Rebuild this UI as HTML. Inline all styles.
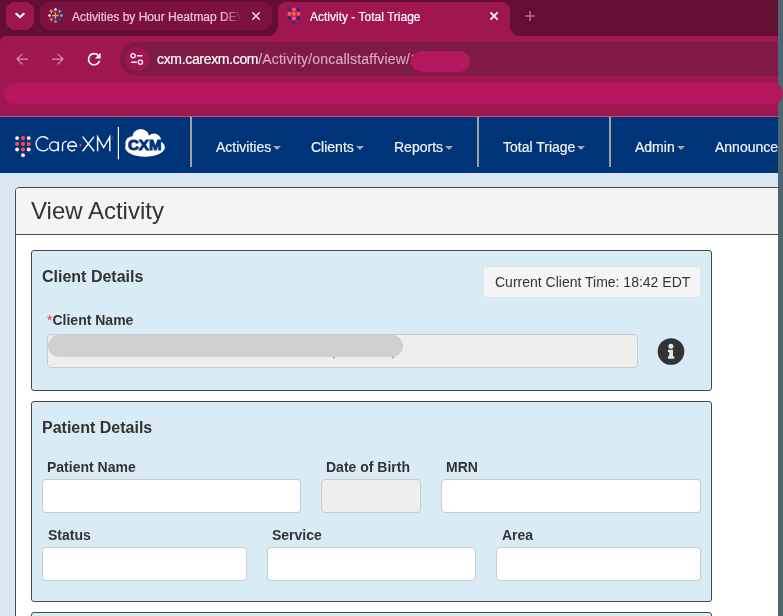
<!DOCTYPE html>
<html><head><meta charset="utf-8">
<style>
*{box-sizing:border-box;margin:0;padding:0}
html,body{width:783px;height:616px;overflow:hidden;background:#dae6f2;font-family:"Liberation Sans",sans-serif}
.abs{position:absolute}
.navitem,.h4,.lbl,.txt{will-change:transform}
#frame{position:absolute;left:0;top:0;width:783px;height:60px;background:#640e33}
#ddbtn{left:6px;top:2px;width:28px;height:28px;border-radius:9px;background:#9d1650}
#tab1{left:40px;top:2px;width:232px;height:28px;border-radius:9px;background:#7c1140}
#tab2{left:278px;top:2px;width:232px;height:40px;border-radius:8px 8px 0 0;background:#a01650}
#toolbar{left:0;top:36px;width:783px;height:80px;background:#a01650;border-top-left-radius:6px}
#omni{left:120px;top:42px;width:680px;height:34px;border-radius:17px;background:#7e1a45}
#siteinfo{left:125px;top:47px;width:24px;height:24px;border-radius:12px;background:#a01650}
#pill{left:4px;top:83px;width:779px;height:21px;border-radius:10.5px;background:#b5175f}
#nav{left:0;top:117px;width:783px;height:56px;background:#003478}
#navline{left:0;top:116px;width:783px;height:1px;background:#c8507f}
.navitem{position:absolute;top:139px;color:#f2f2f2;font-size:14px;line-height:16px;white-space:nowrap;-webkit-text-stroke:0.2px #f2f2f2}
.caret{display:inline-block;width:0;height:0;border-left:4px solid transparent;border-right:4px solid transparent;border-top:4px solid #a8a8a8;vertical-align:middle;margin-left:2px;margin-top:-1px}
.vdiv{position:absolute;top:117px;width:2px;height:50px;background:#a0a0a0}
#scroll{left:778px;top:0;width:5px;height:616px;background:#4d6670}
#panel{left:15px;top:187px;width:800px;height:460px;background:#fff;border:1px solid #4a4a4a;border-radius:4px}
#phead{left:16px;top:188px;width:790px;height:47px;background:#f4f4f4;border-bottom:1px solid #4a4a4a;border-top-left-radius:3px}
.box{position:absolute;background:#d9ebf5;border:1px solid #474747;border-radius:3px}
.h4{position:absolute;font-size:16px;font-weight:bold;color:#333;line-height:18px;white-space:nowrap}
.lbl{position:absolute;font-size:14px;font-weight:bold;color:#333;line-height:16px;white-space:nowrap}
.inp{position:absolute;background:#fff;border:1px solid #ccc;border-radius:4px}
.inp.dis{background:#eee}
</style></head><body>
<div id="frame"></div>
<div class="abs" id="ddbtn"></div>
<div class="abs" id="tab1"></div>
<div class="abs" id="toolbar"></div>
<div class="abs" id="tab2"></div>
<div class="abs" id="omni"></div>
<div class="abs" id="siteinfo"></div>

<div class="abs" style="left:268px;top:26px;width:10px;height:10px;background:radial-gradient(circle at 0 0,#640e33 9.5px,#a01650 10.5px)"></div>
<div class="abs" style="left:510px;top:26px;width:10px;height:10px;background:radial-gradient(circle at 100% 0,#640e33 9.5px,#a01650 10.5px)"></div>
<svg class="abs" style="left:0;top:0" width="783" height="116" viewBox="0 0 783 116">
 <!-- chevron -->
 <path d="M16.3 13.8 L20 17.3 L23.7 13.8" fill="none" stroke="#fff" stroke-width="2.1" stroke-linecap="round" stroke-linejoin="round"/>
 <!-- tableau -->
 <g stroke-width="1.4" fill="none">
  <path d="M55.4 12.2V18.8M52.1 15.5H58.7" stroke="#e9a35c"/>
  <path d="M55.5 8V11M54 9.5H57" stroke="#b9cfdb"/>
  <path d="M51.4 9.4V13.4M49.4 11.4H53.4" stroke="#e79a58"/>
  <path d="M59.4 9.4V13.4M57.4 11.4H61.4" stroke="#5b8fc6"/>
  <path d="M49.5 14V17M48 15.5H51" stroke="#b9cfdb"/>
  <path d="M61.5 14V17M60 15.5H63" stroke="#62a0d2"/>
  <path d="M51.4 17.4V21.4M49.4 19.4H53.4" stroke="#e2714e"/>
  <path d="M59.4 17.4V21.4M57.4 19.4H61.4" stroke="#1f4a98"/>
  <path d="M55.5 20V23M54 21.5H57" stroke="#5d9bd0"/>
 </g>
 <!-- tab1 close -->
 <path d="M252.4 12.4L259.6 19.6M259.6 12.4L252.4 19.6" stroke="#eed6e1" stroke-width="1.5"/>
 <!-- favicon -->
 <g>
  <circle cx="289.5" cy="9.5" r="1.7" fill="#163489"/><circle cx="293.9" cy="9.5" r="2.1" fill="#ff5262"/><circle cx="298.4" cy="9.5" r="1.7" fill="#163489"/>
  <circle cx="289.5" cy="13.9" r="2.1" fill="#ff5262"/><circle cx="293.9" cy="13.9" r="2.1" fill="#f65a55"/><circle cx="298.4" cy="13.9" r="2.1" fill="#ff5262"/>
  <circle cx="289.5" cy="18.3" r="1.7" fill="#163489"/><circle cx="293.9" cy="18.3" r="2.1" fill="#ff5262"/><circle cx="298.4" cy="18.3" r="1.7" fill="#163489"/>
  <circle cx="293.9" cy="22.7" r="1.7" fill="#163489"/>
 </g>
 <!-- tab2 close -->
 <path d="M490.4 12.4L497.6 19.6M497.6 12.4L490.4 19.6" stroke="#fff" stroke-width="1.7"/>
 <!-- plus -->
 <path d="M530 11V21M525 16H535" stroke="#b96a92" stroke-width="1.5"/>
 <!-- back / fwd -->
 <path d="M28 59H17.2M22.5 53.6L17 59L22.5 64.4" fill="none" stroke="#d48bac" stroke-width="1.25"/>
 <path d="M52 59H62.8M57.5 53.6L63 59L57.5 64.4" fill="none" stroke="#d48bac" stroke-width="1.25"/>
 <!-- reload -->
 <path transform="translate(84.6,49.6) scale(0.8)" d="M17.65 6.35C16.2 4.9 14.21 4 12 4c-4.42 0-7.99 3.58-7.99 8s3.57 8 7.99 8c3.73 0 6.840-2.550 7.730-6h-2.080c-.82 2.33-3.04 4-5.65 4-3.31 0-6-2.690-6-6s2.690-6 6-6c1.66 0 3.14.69 4.22 1.78L13 11h7V4l-2.35 2.35z" fill="#fff"/>
 <!-- tune icon -->
 <circle cx="133.1" cy="55.8" r="2.1" fill="none" stroke="#fff" stroke-width="1.3"/>
 <path d="M137 55.8H142.4M131.2 62.3H136.8" stroke="#fff" stroke-width="1.5"/>
 <circle cx="140.4" cy="62.3" r="2.1" fill="none" stroke="#fff" stroke-width="1.3"/>
</svg>
<div class="abs txt" style="left:72px;top:9px;width:170px;font-size:12px;line-height:16px;color:#e9c6d6;white-space:nowrap;-webkit-text-stroke:0.2px #e9c6d6;overflow:hidden;-webkit-mask-image:linear-gradient(to right,#000 150px,transparent 170px)">Activities by Hour Heatmap DEV</div>
<div class="abs txt" style="left:310px;top:9px;font-size:12px;line-height:16px;color:#fff;white-space:nowrap;-webkit-text-stroke:0.2px #fff">Activity - Total Triage</div>
<div class="abs txt" style="left:157px;top:51px;font-size:14px;line-height:16px;color:#fff;white-space:nowrap"><span style="letter-spacing:-0.33px;-webkit-text-stroke:0.2px #fff">cxm.carexm.com</span><span style="color:#dba9c0;letter-spacing:0.2px;-webkit-text-stroke:0.15px #dba9c0">/Activity/oncallstaffview/</span><span style="color:#dba9c0">1</span></div>
<div class="abs" style="left:411px;top:51px;width:59px;height:21px;border-radius:10.5px;background:#b5175f"></div>
<div class="abs" id="navline"></div>
<div class="abs" id="nav"></div>

<svg class="abs" style="left:0;top:116px" width="190" height="57" viewBox="0 116 190 57">
 <g>
  <circle cx="17.1" cy="138.1" r="1.9" fill="#fff"/><circle cx="23" cy="138.1" r="2.1" fill="#ff4757"/><circle cx="28.7" cy="138.1" r="1.9" fill="#fff"/>
  <circle cx="17.1" cy="143.9" r="2.1" fill="#ff4757"/><circle cx="23" cy="143.9" r="2.1" fill="#ff4757"/><circle cx="28.7" cy="143.9" r="2.1" fill="#ff4757"/>
  <circle cx="17.1" cy="149.5" r="1.9" fill="#fff"/><circle cx="23" cy="149.5" r="2.1" fill="#ff4757"/><circle cx="28.7" cy="149.5" r="1.9" fill="#fff"/>
  <circle cx="23" cy="155.2" r="1.9" fill="#fff"/>
 </g>
 <g fill="none" stroke="#fff" stroke-width="1.35">
  <path d="M48.3 139.3 A6.9 7.1 0 1 0 48.3 148.3"/>
  <circle cx="54" cy="146.3" r="4.4"/>
  <path d="M58.3 141.5V151.3"/>
  <path d="M62.5 151.3V145.5 A4.3 4.3 0 0 1 66.8 141.4"/>
  <path d="M68.1 146.2H76.6 A4.4 4.5 0 1 0 75.2 149.6"/>
  <path d="M82.6 136.6L94.2 151.3M94 136.6L82.6 151.3" stroke-width="1.4"/>
  <path d="M97.6 151.3V136.8L103.7 147.6L109.8 136.8V151.3" stroke-width="1.4"/>
 </g>
 <circle cx="80.5" cy="145.1" r="1.1" fill="#ff4757"/>
 <path d="M111.6 137.2h1.6M112.4 137.2v1.6" stroke="#8090b8" stroke-width="0.4"/>
 <rect x="117.8" y="127" width="1.2" height="32.3" fill="#fff"/>
 <g fill="#fff">
  <circle cx="140.8" cy="137.7" r="8.6"/>
  <circle cx="154" cy="140.8" r="7.2"/>
  <circle cx="132.8" cy="143.6" r="7.4"/>
  <ellipse cx="145" cy="147.2" rx="19.8" ry="9.5"/>
 </g>
 <text x="144.7" y="150.3" text-anchor="middle" font-family="Liberation Sans" font-weight="bold" font-size="15" fill="#003478" stroke="#003478" stroke-width="1.0" letter-spacing="0.1">CXM</text>
</svg>
<div class="vdiv" style="left:190px"></div>
<div class="vdiv" style="left:477px"></div>
<div class="vdiv" style="left:609px"></div>
<div class="navitem" style="left:216px">Activities<span class="caret"></span></div>
<div class="navitem" style="left:311px">Clients<span class="caret"></span></div>
<div class="navitem" style="left:394px">Reports<span class="caret"></span></div>
<div class="navitem" style="left:503px">Total Triage<span class="caret"></span></div>
<div class="navitem" style="left:635px">Admin<span class="caret"></span></div>
<div class="navitem" style="left:715px">Announcements</div>

<div class="abs" id="panel"></div>
<div class="abs" id="phead"></div>
<div class="abs txt" style="left:31px;top:196px;font-size:24px;color:#333;line-height:30px">View Activity</div>

<div class="box" style="left:31px;top:250px;width:681px;height:141px"></div>
<div class="h4" style="left:42px;top:268px">Client Details</div>
<div class="abs" style="left:483px;top:266px;width:218px;height:32px;background:#f5f5f5;border:1px solid #e3e3e3;border-radius:2px"></div>
<div class="abs txt" style="left:495px;top:274px;font-size:14px;color:#333;line-height:16px;white-space:nowrap">Current Client Time: 18:42 EDT</div>
<div class="lbl" style="left:47px;top:312px"><span style="color:#e8343f;font-weight:normal">*</span>Client Name</div>
<div class="inp dis" style="left:47px;top:334px;width:591px;height:34px"></div>
<div class="abs" style="left:48px;top:335px;width:355px;height:22px;border-radius:11px;background:#d0d0d0"></div>
<svg class="abs" style="left:330px;top:354px" width="70" height="8" viewBox="330 354 70 8"><path d="M333.2 356.8L334.4 358.4M393.6 356.8L392.4 358.4" stroke="#555" stroke-width="0.9"/></svg>
<svg class="abs" style="left:656px;top:337px" width="30" height="30" viewBox="656 337 30 30"><circle cx="671" cy="351.5" r="13.3" fill="#333"/><circle cx="670.9" cy="346.2" r="2.5" fill="#d9ebf5"/><path d="M667.9 349.8H673V356.3H674.3V358.7H667.9V356.3H669.2V352H667.9Z" fill="#d9ebf5"/></svg>

<div class="box" style="left:31px;top:401px;width:681px;height:201px"></div>
<div class="h4" style="left:42px;top:419px">Patient Details</div>
<div class="lbl" style="left:47px;top:459px">Patient Name</div>
<div class="lbl" style="left:326px;top:459px">Date of Birth</div>
<div class="lbl" style="left:446px;top:459px">MRN</div>
<div class="inp" style="left:42px;top:479px;width:259px;height:34px"></div>
<div class="inp dis" style="left:321px;top:479px;width:100px;height:34px"></div>
<div class="inp" style="left:441px;top:479px;width:260px;height:34px"></div>
<div class="lbl" style="left:48px;top:527px">Status</div>
<div class="lbl" style="left:272px;top:527px">Service</div>
<div class="lbl" style="left:502px;top:527px">Area</div>
<div class="inp" style="left:42px;top:547px;width:205px;height:34px"></div>
<div class="inp" style="left:267px;top:547px;width:209px;height:34px"></div>
<div class="inp" style="left:496px;top:547px;width:205px;height:34px"></div>
<div class="box" style="left:31px;top:612px;width:681px;height:100px"></div>

<div class="abs" id="scroll"></div>
<div class="abs" id="pill"></div>
</body></html>
